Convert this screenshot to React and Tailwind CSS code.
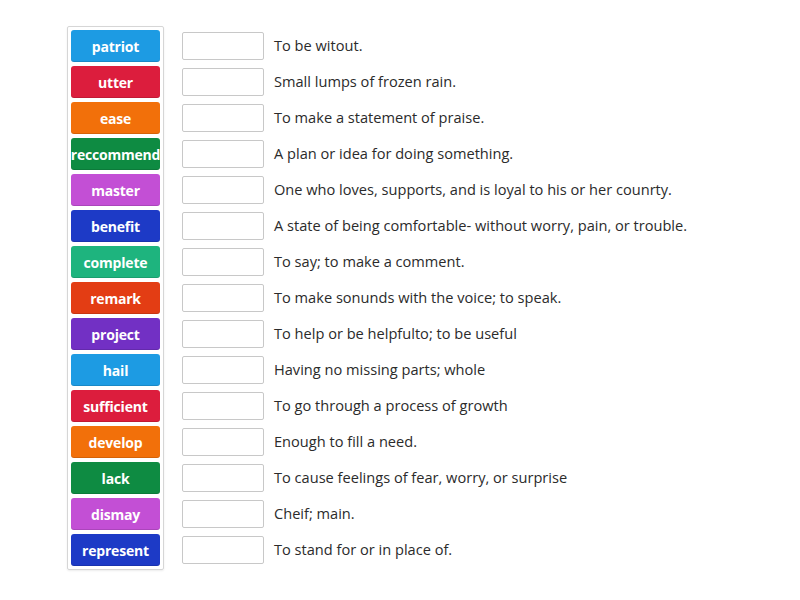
import React from 'react';

// Word tiles and their definitions (matching-pairs activity)
const words = [
  { text: 'patriot', color: 'bg-[#1d9be3]' },
  { text: 'utter', color: 'bg-[#dc1d3d]' },
  { text: 'ease', color: 'bg-[#f2700a]' },
  { text: 'reccommend', color: 'bg-[#0e8b42]' },
  { text: 'master', color: 'bg-[#c34fd5]' },
  { text: 'benefit', color: 'bg-[#1d3ac6]' },
  { text: 'complete', color: 'bg-[#1eb47e]' },
  { text: 'remark', color: 'bg-[#e33d14]' },
  { text: 'project', color: 'bg-[#7230c4]' },
  { text: 'hail', color: 'bg-[#1d9be3]' },
  { text: 'sufficient', color: 'bg-[#dc1d3d]' },
  { text: 'develop', color: 'bg-[#f2700a]' },
  { text: 'lack', color: 'bg-[#0e8b42]' },
  { text: 'dismay', color: 'bg-[#c34fd5]' },
  { text: 'represent', color: 'bg-[#1d3ac6]' },
];

const definitions = [
  'To be witout.',
  'Small lumps of frozen rain.',
  'To make a statement of praise.',
  'A plan or idea for doing something.',
  'One who loves, supports, and is loyal to his or her counrty.',
  'A state of being comfortable- without worry, pain, or trouble.',
  'To say; to make a comment.',
  'To make sonunds with the voice; to speak.',
  'To help or be helpfulto; to be useful',
  'Having no missing parts; whole',
  'To go through a process of growth',
  'Enough to fill a need.',
  'To cause feelings of fear, worry, or surprise',
  'Cheif; main.',
  'To stand for or in place of.',
];

const App = () => {
  return (
    <div
      className="w-[800px] h-[600px] bg-white flex items-start pl-[67px] pt-[26px]"
      style={{ fontFamily: '"Open Sans", "Noto Sans", sans-serif' }}
    >
      {/* Word tiles */}
      <div className="w-[97px] border border-[#d6d6d6] rounded-[2px] p-[3px] flex flex-col gap-[4px] shadow-[0_1px_2px_rgba(0,0,0,0.08)]">
        {words.map((w) => (
          <div
            key={w.text}
            className={`${w.color} h-[32px] rounded-[3px] flex items-center justify-center text-white text-[14px] font-bold tracking-[-0.2px] shadow-[inset_0_-1px_0_rgba(0,0,0,0.12)]`}
          >
            {w.text}
          </div>
        ))}
      </div>

      {/* Drop boxes and definitions */}
      <div className="ml-[18px] pt-[4px] flex flex-col gap-[4px]">
        {definitions.map((d, i) => (
          <div key={i} className="h-[32px] flex items-center">
            <div className="w-[82px] h-[28px] border border-[#c8c8c8] rounded-[2px] bg-white" />
            <span className="ml-[10px] text-[14.6px] text-[#2b2b2b]">{d}</span>
          </div>
        ))}
      </div>
    </div>
  );
};

export default App;
